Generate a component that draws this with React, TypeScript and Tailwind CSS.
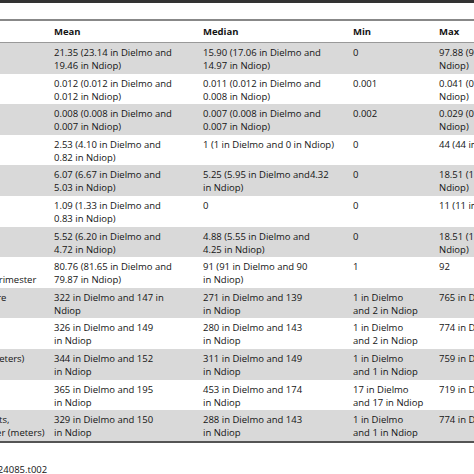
type Row = {
  label: string[];
  mean: string[];
  median: string[];
  min: string[];
  max: string[];
};

const rows: Row[] = [
  {
    label: ["Rainfall (mm)"],
    mean: ["21.35 (23.14 in Dielmo and", "19.46 in Ndiop)"],
    median: ["15.90 (17.06 in Dielmo and", "14.97 in Ndiop)"],
    min: ["0"],
    max: ["97.88 (98.12 in Dielmo and", "Ndiop)"],
  },
  {
    label: ["NDVI"],
    mean: ["0.012 (0.012 in Dielmo and", "0.012 in Ndiop)"],
    median: ["0.011 (0.012 in Dielmo and", "0.008 in Ndiop)"],
    min: ["0.001"],
    max: ["0.041 (0.041 in Dielmo and", "Ndiop)"],
  },
  {
    label: ["EVI"],
    mean: ["0.008 (0.008 in Dielmo and", "0.007 in Ndiop)"],
    median: ["0.007 (0.008 in Dielmo and", "0.007 in Ndiop)"],
    min: ["0.002"],
    max: ["0.029 (0.029 in Dielmo and", "Ndiop)"],
  },
  {
    label: ["Rainy days"],
    mean: ["2.53 (4.10 in Dielmo and", "0.82 in Ndiop)"],
    median: ["1 (1 in Dielmo and 0 in Ndiop)"],
    min: ["0"],
    max: ["44 (44 in Dielmo and 30 in Ndiop)"],
  },
  {
    label: ["Temperature"],
    mean: ["6.07 (6.67 in Dielmo and", "5.03 in Ndiop)"],
    median: ["5.25 (5.95 in Dielmo and4.32", "in Ndiop)"],
    min: ["0"],
    max: ["18.51 (18.51 in Dielmo and", "Ndiop)"],
  },
  {
    label: ["Humidity"],
    mean: ["1.09 (1.33 in Dielmo and", "0.83 in Ndiop)"],
    median: ["0"],
    min: ["0"],
    max: ["11 (11 in Dielmo and 9 in Ndiop)"],
  },
  {
    label: ["Wind"],
    mean: ["5.52 (6.20 in Dielmo and", "4.72 in Ndiop)"],
    median: ["4.88 (5.55 in Dielmo and", "4.25 in Ndiop)"],
    min: ["0"],
    max: ["18.51 (18.51 in Dielmo and", "Ndiop)"],
  },
  {
    label: ["Percentage of rainfall", "during the high malaria transmission trimester"],
    mean: ["80.76 (81.65 in Dielmo and", "79.87 in Ndiop)"],
    median: ["91 (91 in Dielmo and 90", "in Ndiop)"],
    min: ["1"],
    max: ["92"],
  },
  {
    label: ["Distance to the nearest health structure", "(meters)"],
    mean: ["322 in Dielmo and 147 in", "Ndiop"],
    median: ["271 in Dielmo and 139", "in Ndiop"],
    min: ["1 in Dielmo", "and 2 in Ndiop"],
    max: ["765 in Dielmo and 412 in Ndiop"],
  },
  {
    label: ["Distance to the nearest well", "(meters)"],
    mean: ["326 in Dielmo and 149", "in Ndiop"],
    median: ["280 in Dielmo and 143", "in Ndiop"],
    min: ["1 in Dielmo", "and 2 in Ndiop"],
    max: ["774 in Dielmo and 415 in Ndiop"],
  },
  {
    label: ["Distance to the nearest water body (meters)"],
    mean: ["344 in Dielmo and 152", "in Ndiop"],
    median: ["311 in Dielmo and 149", "in Ndiop"],
    min: ["1 in Dielmo", "and 1 in Ndiop"],
    max: ["759 in Dielmo and 420 in Ndiop"],
  },
  {
    label: ["Distance to the market", "(meters)"],
    mean: ["365 in Dielmo and 195", "in Ndiop"],
    median: ["453 in Dielmo and 174", "in Ndiop"],
    min: ["17 in Dielmo", "and 17 in Ndiop"],
    max: ["719 in Dielmo and 512 in Ndiop"],
  },
  {
    label: ["Distance to nearest swamps and outlets,", "or breeding sites close to the main river (meters)"],
    mean: ["329 in Dielmo and 150", "in Ndiop"],
    median: ["288 in Dielmo and 143", "in Ndiop"],
    min: ["1 in Dielmo", "and 1 in Ndiop"],
    max: ["774 in Dielmo and 415 in Ndiop"],
  },
];

function Lines({ lines }: { lines: string[] }) {
  return (
    <>
      {lines.map((l, i) => (
        <div key={i} className="whitespace-nowrap">
          {l}
        </div>
      ))}
    </>
  );
}

export default function App() {
  return (
    <div
      className="w-[474px] h-[474px] overflow-hidden bg-white text-[#141414] text-[9.5px] leading-[13px]"
      style={{ fontFamily: '"Open Sans", "Liberation Sans", sans-serif' }}
    >
      {/* bottom of the title bar */}
      <div className="h-[3px] bg-[#333]" />

      <div className="w-[660px] -ml-[180px] mt-[16px]">
        {/* header */}
        <div className="grid grid-cols-[234px_149px_150px_86px_1fr] h-[24px] items-center border-t-2 border-b border-t-[#888] border-b-[#999] font-bold">
          <div />
          <div>Mean</div>
          <div>Median</div>
          <div>Min</div>
          <div>Max</div>
        </div>

        {/* body */}
        <div className="border-b-2 border-[#555]">
          {rows.map((r, i) => (
            <div
              key={i}
              className={`grid grid-cols-[234px_149px_150px_86px_1fr] h-[30.6px] pt-[3px] ${
                i % 2 === 0 ? 'bg-[#d9d9d9]' : 'bg-white'
              }`}
            >
              <div className="pl-[10px]">
                <Lines lines={r.label} />
              </div>
              <div>
                <Lines lines={r.mean} />
              </div>
              <div>
                <Lines lines={r.median} />
              </div>
              <div>
                <Lines lines={r.min} />
              </div>
              <div>
                <Lines lines={r.max} />
              </div>
            </div>
          ))}
        </div>

        <div className="mt-[20px] pl-[53px] whitespace-nowrap">doi:10.1371/journal.pone.0024085.t002</div>
      </div>
    </div>
  );
}
